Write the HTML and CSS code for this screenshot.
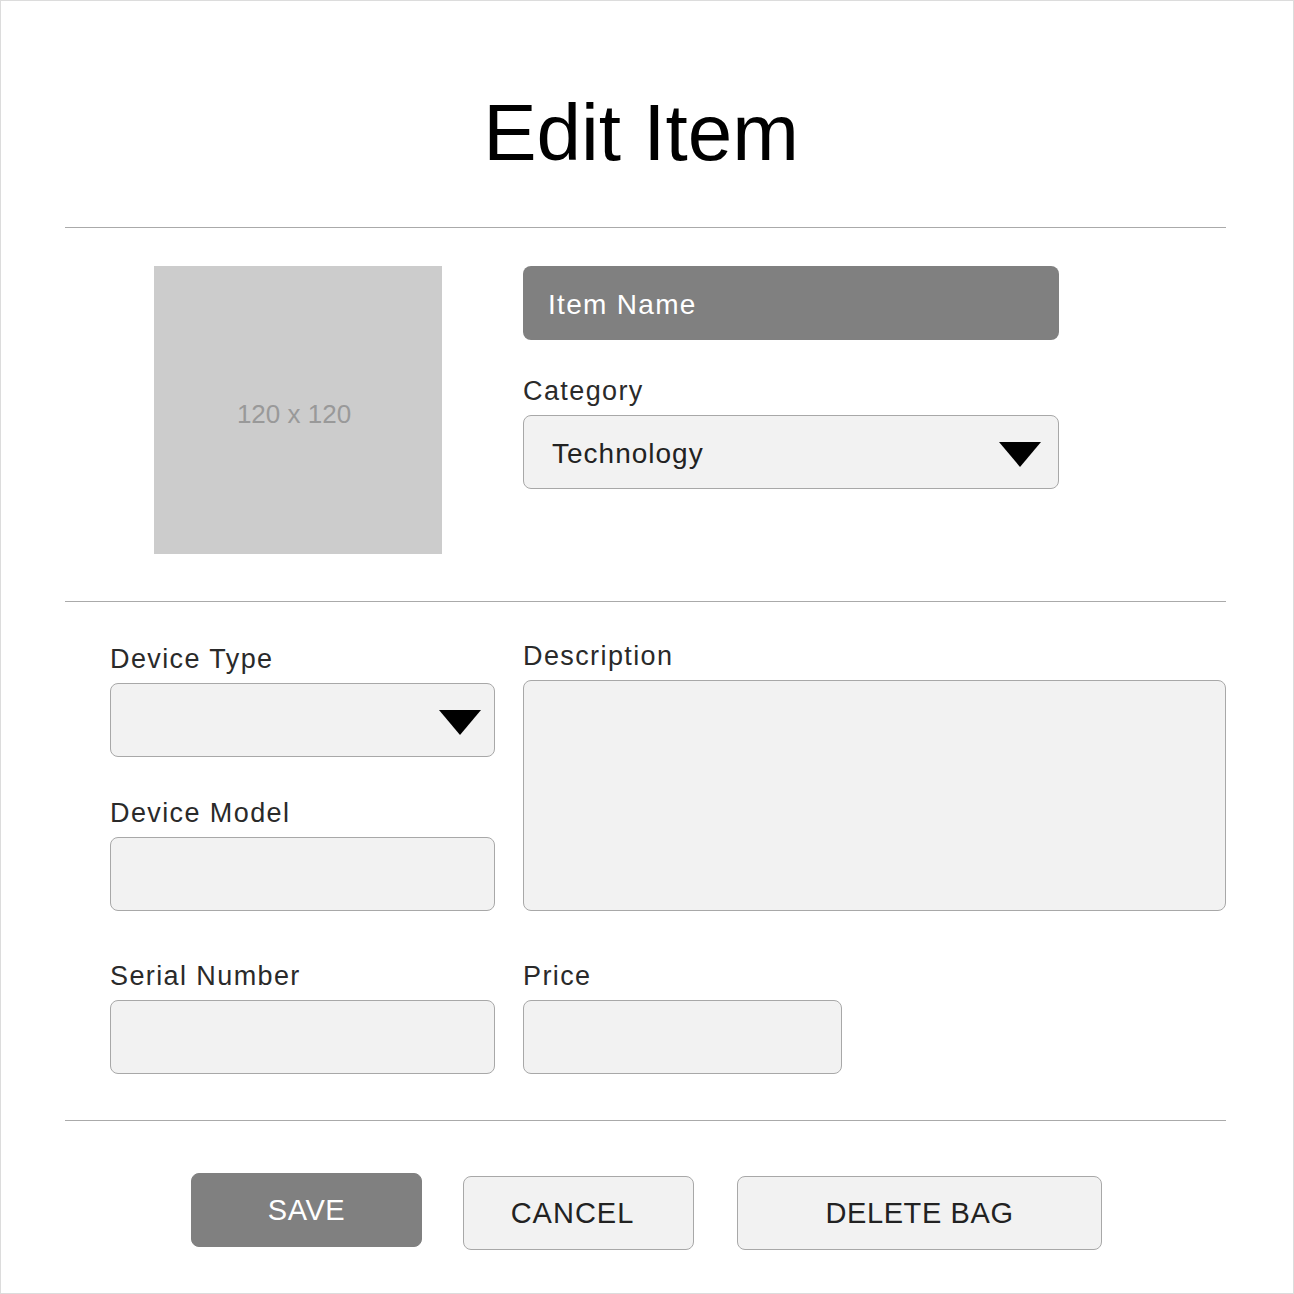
FILE: index.html
```html
<!DOCTYPE html>
<html lang="en">
<head>
  <meta charset="UTF-8">
  <meta name="viewport" content="width=device-width, initial-scale=1.0">
  <title>Edit Item</title>
  <link rel="stylesheet" href="styles.css">
</head>
<body>
  <div class="page">
    <h1 class="title">Edit Item</h1>

    <div class="sheet">
      <hr class="rule">

      <div class="top-section">
        <div class="photo"><span>120 x 120</span></div>
        <div class="top-fields">
          <div class="name-box">Item Name</div>
          <div class="label category-label">Category</div>
          <div class="box select">
            <span class="value">Technology</span>
            <span class="caret"></span>
          </div>
        </div>
      </div>

      <hr class="rule">

      <div class="detail-grid">
        <div class="left-col">
          <div class="label">Device Type</div>
          <div class="box select small-caret">
            <span class="value"></span>
            <span class="caret"></span>
          </div>
          <div class="label model-label">Device Model</div>
          <div class="box"></div>
        </div>
        <div class="right-col">
          <div class="label">Description</div>
          <div class="box textarea"></div>
        </div>
        <div class="field">
          <div class="label">Serial Number</div>
          <div class="box"></div>
        </div>
        <div class="field">
          <div class="label">Price</div>
          <div class="box price"></div>
        </div>
      </div>

      <hr class="rule">

      <div class="actions">
        <button class="btn btn-save">SAVE</button>
        <button class="btn btn-cancel">CANCEL</button>
        <button class="btn btn-delete">DELETE BAG</button>
      </div>
    </div>
  </div>
</body>
</html>
```

FILE: styles.css
```css
* {
  margin: 0;
  padding: 0;
  box-sizing: border-box;
}

body {
  background: #fff;
  font-family: "Liberation Sans", Arial, sans-serif;
  color: #222;
}

.page {
  width: 1294px;
  height: 1294px;
  border: 1px solid #dcdcdc;
  padding-top: 92px;
}

.title {
  font-size: 80px;
  line-height: 80px;
  font-weight: normal;
  color: #000;
  text-align: center;
  padding-right: 12px;
}

.sheet {
  width: 1161px;
  margin-left: 64px;
}

.rule {
  border: none;
  border-top: 1px solid #aaa;
}

.title + .sheet .rule:first-child {
  margin-top: 54px;
}

/* photo + name/category */
.top-section {
  display: flex;
  padding: 38px 0 47px 89px;
}

.photo {
  width: 288px;
  height: 288px;
  background: #cccccc;
  display: flex;
  align-items: center;
  justify-content: center;
  padding: 8px 8px 0 0;
}

.photo span {
  font-size: 26px;
  color: #999;
}

.top-fields {
  margin-left: 81px;
  width: 536px;
}

.name-box {
  height: 74px;
  background: #808080;
  border-radius: 8px;
  color: #fff;
  font-size: 28px;
  letter-spacing: 1.3px;
  display: flex;
  align-items: center;
  padding: 4px 0 0 25px;
}

.label {
  font-size: 27px;
  line-height: 32px;
  letter-spacing: 1.4px;
  color: #2a2a2a;
  margin-bottom: 8px;
}

.category-label {
  margin-top: 35px;
}

.box {
  height: 74px;
  background: #f2f2f2;
  border: 1px solid #a8a8a8;
  border-radius: 8px;
}

.select {
  display: flex;
  align-items: center;
  justify-content: space-between;
  padding: 4px 17px 0 28px;
  font-size: 28px;
  letter-spacing: 1px;
  color: #222;
}

.small-caret {
  padding-right: 13px;
}

.caret {
  width: 0;
  height: 0;
  border-left: 21px solid transparent;
  border-right: 21px solid transparent;
  border-top: 25px solid #000;
}

/* details */
.detail-grid {
  display: grid;
  grid-template-columns: 385px 703px;
  column-gap: 28px;
  row-gap: 49px;
  padding: 38px 0 46px 45px;
  align-items: start;
}

.left-col {
  padding-top: 3px;
}

.model-label {
  margin-top: 40px;
}

.textarea {
  height: 231px;
}

.price {
  width: 319px;
}

/* buttons */
.actions {
  display: flex;
  align-items: flex-start;
  padding: 52px 0 0 126px;
}

.btn {
  height: 74px;
  width: 231px;
  border-radius: 8px;
  font-family: "Liberation Sans", Arial, sans-serif;
  font-size: 29px;
  letter-spacing: 0.6px;
  background: #f2f2f2;
  border: 1.5px solid #a8a8a8;
  color: #222;
}

.btn-save {
  background: #808080;
  border-color: #808080;
  color: #fff;
}

.btn-cancel {
  margin: 3px 0 0 41px;
  padding-right: 12px;
  letter-spacing: 1px;
}

.btn-delete {
  width: 365px;
  margin: 3px 0 0 43px;
}
```
